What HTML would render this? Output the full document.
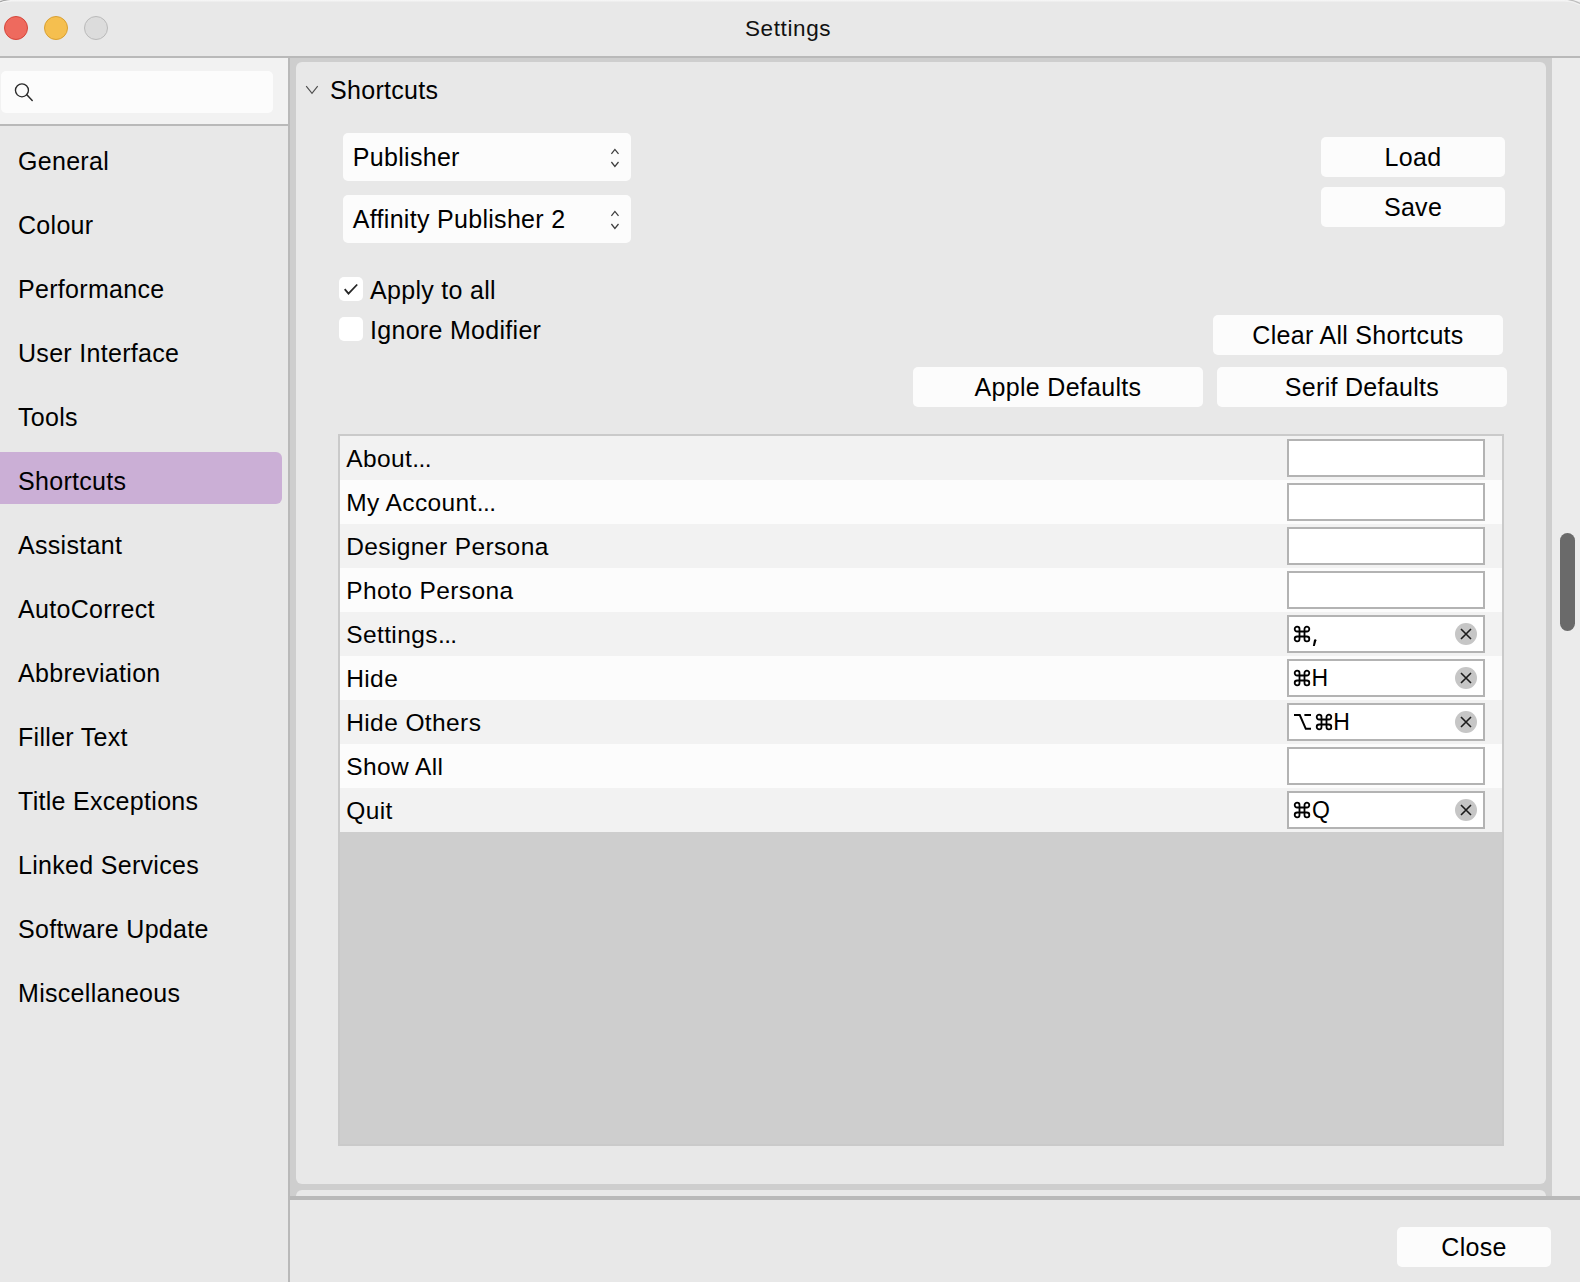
<!DOCTYPE html>
<html><head><meta charset="utf-8"><title>Settings</title>
<style>
*{box-sizing:border-box;margin:0;padding:0}
html,body{width:1580px;height:1282px;overflow:hidden}
body{position:relative;background:#e8e8e8;font-family:"Liberation Sans",sans-serif;color:#000;font-size:25px;letter-spacing:0.3px}
.a{position:absolute}
.t{position:absolute;white-space:nowrap;line-height:1}
.light{position:absolute;top:16px;width:24px;height:24px;border-radius:50%}
.side-item{position:absolute;left:18px;white-space:nowrap;line-height:1;font-size:25px}
.btn{position:absolute;background:#fcfcfc;border-radius:5px;height:40px;text-align:center;line-height:40px;font-size:25px}
.row{position:absolute;left:340px;width:1162px;height:44px}
.row.g{background:#f2f2f2}
.row.w{background:#fcfcfc}
.row .lbl{position:absolute;left:6.2px;top:11px;font-size:24.5px;letter-spacing:0.4px;line-height:1;white-space:nowrap}
.e{letter-spacing:-0.6px}
.row .box{position:absolute;left:947px;top:3px;width:198px;height:38px;border:2px solid #b3b3b3;background:#fff}
.row .k{position:absolute;top:11.4px;font-size:23px;letter-spacing:0;line-height:1;white-space:nowrap}
.row .clr{position:absolute;left:1115px;top:11px;width:22px;height:22px;border-radius:50%;background:#c6c6c6}
svg{display:block}
</style></head>
<body>
<!-- titlebar -->
<div class="a" style="left:0;top:0;width:1580px;height:3px;background:linear-gradient(#f7f7f7 0,#f2f2f2 1px,#e8e8e8 2.2px)"></div>
<svg class="a" style="left:0;top:0" width="14" height="6" viewBox="0 0 14 6"><path d="M-1 2.3Q3 0.2 10 -0.4" fill="none" stroke="#a8a8a8" stroke-width="1.3"/><path d="M-1 3.4Q3 1.3 11 0.7" fill="none" stroke="#f5f5f5" stroke-width="1"/></svg>
<svg class="a" style="left:1560px;top:0" width="20" height="8" viewBox="0 0 20 8"><path d="M7 -0.6Q15 0.4 21 4" fill="none" stroke="#bdbdbd" stroke-width="1.15"/><path d="M5 0.6Q13 1.6 21 5.3" fill="none" stroke="#f2f2f2" stroke-width="1"/></svg>
<div class="light" style="left:4px;background:#ee6a5e;border:1px solid #d5463b"></div>
<div class="light" style="left:44px;background:#f5bf4f;border:1px solid #d9a032"></div>
<div class="light" style="left:84px;background:#dcdcdc;border:1px solid #bababa"></div>
<div class="t" style="left:745px;top:17.5px;font-size:22.5px;letter-spacing:0.6px;color:#111">Settings</div>
<div class="a" style="left:0;top:56px;width:1580px;height:2px;background:#b9b9b9"></div>

<!-- sidebar -->
<div class="a" style="left:0;top:58px;width:288px;height:66px;background:#f2f2f2"></div>
<div class="a" style="left:1px;top:71px;width:272px;height:42px;background:#fcfcfc;border-radius:5px"></div>
<svg class="a" style="left:13px;top:82px" width="22" height="22" viewBox="0 0 22 22"><circle cx="8.95" cy="8.3" r="6.5" fill="none" stroke="#2a2a2a" stroke-width="1.35"/><line x1="13.6" y1="12.6" x2="19.2" y2="18.4" stroke="#2a2a2a" stroke-width="1.5" stroke-linecap="round"/></svg>
<div class="a" style="left:0;top:124px;width:288px;height:2px;background:#b9b9b9"></div>
<div class="a" style="left:288px;top:58px;width:2px;height:1224px;background:#b9b9b9"></div>
<div class="a" style="left:0;top:452px;width:282px;height:52px;background:#cbafd6;border-radius:0 6px 6px 0"></div>

<div class="side-item" style="top:149px">General</div>
<div class="side-item" style="top:213px">Colour</div>
<div class="side-item" style="top:277px">Performance</div>
<div class="side-item" style="top:341px">User Interface</div>
<div class="side-item" style="top:405px">Tools</div>
<div class="side-item" style="top:469px">Shortcuts</div>
<div class="side-item" style="top:533px">Assistant</div>
<div class="side-item" style="top:597px">AutoCorrect</div>
<div class="side-item" style="top:661px">Abbreviation</div>
<div class="side-item" style="top:725px">Filler Text</div>
<div class="side-item" style="top:789px">Title Exceptions</div>
<div class="side-item" style="top:853px">Linked Services</div>
<div class="side-item" style="top:917px">Software Update</div>
<div class="side-item" style="top:981px">Miscellaneous</div>

<!-- content area -->
<div class="a" style="left:290px;top:58px;width:1262px;height:1138px;background:#cecece"></div>
<div class="a" style="left:1552px;top:58px;width:28px;height:1138px;background:#ebebeb"></div>
<div class="a" style="left:1560px;top:533px;width:15.4px;height:98px;background:#6a6a6a;border-radius:7.5px"></div>
<div class="a" style="left:296px;top:62px;width:1250px;height:1122px;background:#e8e8e8;border-radius:6px"></div>
<div class="a" style="left:296px;top:1190px;width:1250px;height:20px;background:#e8e8e8;border-radius:6px"></div>

<!-- footer -->
<div class="a" style="left:290px;top:1196px;width:1290px;height:4px;background:#b9b9b9"></div>
<div class="a" style="left:290px;top:1200px;width:1290px;height:82px;background:#e8e8e8"></div>
<div class="btn" style="left:1397px;top:1227px;width:154px">Close</div>

<svg class="a" style="left:303px;top:84px" width="18" height="14" viewBox="0 0 18 14"><polyline points="3.2,2.2 9,9.4 14.7,2.2" fill="none" stroke="#4d4d4d" stroke-width="1.15"/></svg>
<div class="t" style="left:330px;top:78px;font-size:25px">Shortcuts</div>
<div class="a" style="left:343px;top:133px;width:288px;height:48px;background:#fcfcfc;border-radius:5px"></div>
<div class="t" style="left:352.8px;top:145px">Publisher</div>
<svg class="a" style="left:607px;top:146px" width="16" height="24" viewBox="0 0 16 24"><polyline points="4.4,7.9 7.9,3.4 11.5,7.9" fill="none" stroke="#3c3c3c" stroke-width="1.25"/><polyline points="4.4,16 7.9,20.5 11.5,16" fill="none" stroke="#3c3c3c" stroke-width="1.25"/></svg>
<div class="a" style="left:343px;top:195px;width:288px;height:48px;background:#fcfcfc;border-radius:5px"></div>
<div class="t" style="left:352.8px;top:207px">Affinity Publisher 2</div>
<svg class="a" style="left:607px;top:208px" width="16" height="24" viewBox="0 0 16 24"><polyline points="4.4,7.9 7.9,3.4 11.5,7.9" fill="none" stroke="#3c3c3c" stroke-width="1.25"/><polyline points="4.4,16 7.9,20.5 11.5,16" fill="none" stroke="#3c3c3c" stroke-width="1.25"/></svg>
<div class="btn" style="left:1321px;top:137px;width:184px">Load</div>
<div class="btn" style="left:1321px;top:187px;width:184px">Save</div>
<div class="a" style="left:339px;top:277px;width:24px;height:24px;background:#fff;border-radius:5px"></div>
<svg class="a" style="left:339px;top:277px" width="24" height="24" viewBox="0 0 24 24"><polyline points="5.7,12.2 9.5,16.6 18.2,7.5" fill="none" stroke="#262626" stroke-width="1.8"/></svg>
<div class="a" style="left:339px;top:317px;width:24px;height:24px;background:#fff;border-radius:5px"></div>
<div class="t" style="left:370px;top:278px">Apply to all</div>
<div class="t" style="left:370px;top:318px">Ignore Modifier</div>
<div class="btn" style="left:1213px;top:315px;width:290px">Clear All Shortcuts</div>
<div class="btn" style="left:913px;top:367px;width:290px">Apple Defaults</div>
<div class="btn" style="left:1217px;top:367px;width:290px">Serif Defaults</div>
<div class="a" style="left:338px;top:434px;width:1166px;height:712px;background:#cecece;border:2px solid #cacaca"></div>
</div>
</div>
</div>
</div>
<!--rows-->
<div class="row g" style="top:436px"><div class="lbl">About<span class="e">...</span></div><div class="box"></div></div>
<div class="row w" style="top:480px"><div class="lbl">My Account<span class="e">...</span></div><div class="box"></div></div>
<div class="row g" style="top:524px"><div class="lbl">Designer Persona</div><div class="box"></div></div>
<div class="row w" style="top:568px"><div class="lbl">Photo Persona</div><div class="box"></div></div>
<div class="row g" style="top:612px"><div class="lbl">Settings<span class="e">...</span></div><div class="box"></div><svg class="a" style="left:953px;top:13px" width="18" height="18" viewBox="-1 -1 18 18"><path d="M5.5 12.9V3.1A2.4 2.4 0 1 0 3.1 5.5H12.9A2.4 2.4 0 1 0 10.5 3.1V12.9A2.4 2.4 0 1 0 12.9 10.5H3.1A2.4 2.4 0 1 0 5.5 12.9Z" fill="none" stroke="#000" stroke-width="1.8"/></svg><svg class="a" style="left:972px;top:27px" width="6" height="8" viewBox="0 0 6 8"><path d="M2 0.9Q2.2 0.3 3.2 0.3Q4.5 0.3 4.4 1.2L2.8 7H0.9Z" fill="#000"/></svg><div class="clr"><svg width="22" height="22" viewBox="0 0 22 22"><path d="M6 6L16 16M16 6L6 16" stroke="#1c1c1c" stroke-width="1.6"/></svg></div></div>
<div class="row w" style="top:656px"><div class="lbl">Hide</div><div class="box"></div><svg class="a" style="left:953px;top:13px" width="18" height="18" viewBox="-1 -1 18 18"><path d="M5.5 12.9V3.1A2.4 2.4 0 1 0 3.1 5.5H12.9A2.4 2.4 0 1 0 10.5 3.1V12.9A2.4 2.4 0 1 0 12.9 10.5H3.1A2.4 2.4 0 1 0 5.5 12.9Z" fill="none" stroke="#000" stroke-width="1.8"/></svg><div class="k" style="left:971.6px">H</div><div class="clr"><svg width="22" height="22" viewBox="0 0 22 22"><path d="M6 6L16 16M16 6L6 16" stroke="#1c1c1c" stroke-width="1.6"/></svg></div></div>
<div class="row g" style="top:700px"><div class="lbl">Hide Others</div><div class="box"></div><svg class="a" style="left:954px;top:14px" width="17" height="16" viewBox="0 0 17 16"><path d="M0 1H5.8L11.8 14.8H17M10.4 1H17" fill="none" stroke="#000" stroke-width="2"/></svg><svg class="a" style="left:974.5px;top:13px" width="18" height="18" viewBox="-1 -1 18 18"><path d="M5.5 12.9V3.1A2.4 2.4 0 1 0 3.1 5.5H12.9A2.4 2.4 0 1 0 10.5 3.1V12.9A2.4 2.4 0 1 0 12.9 10.5H3.1A2.4 2.4 0 1 0 5.5 12.9Z" fill="none" stroke="#000" stroke-width="1.8"/></svg><div class="k" style="left:993.2px">H</div><div class="clr"><svg width="22" height="22" viewBox="0 0 22 22"><path d="M6 6L16 16M16 6L6 16" stroke="#1c1c1c" stroke-width="1.6"/></svg></div></div>
<div class="row w" style="top:744px"><div class="lbl">Show All</div><div class="box"></div></div>
<div class="row g" style="top:788px"><div class="lbl">Quit</div><div class="box"></div><svg class="a" style="left:953px;top:13px" width="18" height="18" viewBox="-1 -1 18 18"><path d="M5.5 12.9V3.1A2.4 2.4 0 1 0 3.1 5.5H12.9A2.4 2.4 0 1 0 10.5 3.1V12.9A2.4 2.4 0 1 0 12.9 10.5H3.1A2.4 2.4 0 1 0 5.5 12.9Z" fill="none" stroke="#000" stroke-width="1.8"/></svg><div class="k" style="left:972px">Q</div><div class="clr"><svg width="22" height="22" viewBox="0 0 22 22"><path d="M6 6L16 16M16 6L6 16" stroke="#1c1c1c" stroke-width="1.6"/></svg></div></div>
<!--/rows-->
</body></html>
